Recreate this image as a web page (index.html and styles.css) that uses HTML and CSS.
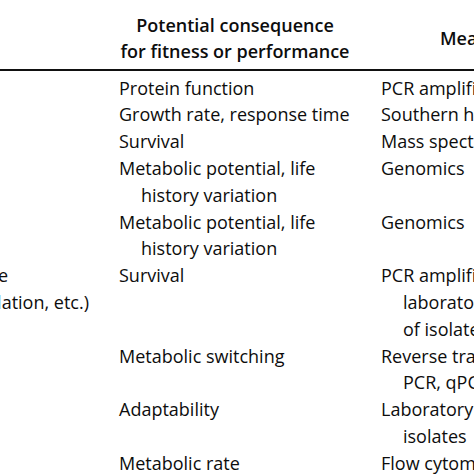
FILE: index.html
```html
<!DOCTYPE html>
<html>
<head>
<meta charset="utf-8">
<link rel="stylesheet" href="styles.css">
</head>
<body>
<div class="table">
  <div class="head">
    <div class="hc c1"></div>
    <div class="hc c2">Potential consequence<br>for fitness or performance</div>
    <div class="hc c3">Measurement approach</div>
  </div>
  <div class="body">
    <div class="cell c1"></div>
    <div class="cell c2">Protein function</div>
    <div class="cell c3">PCR amplification</div>

    <div class="cell c1"></div>
    <div class="cell c2">Growth rate, response time</div>
    <div class="cell c3">Southern hybridization</div>

    <div class="cell c1"></div>
    <div class="cell c2">Survival</div>
    <div class="cell c3">Mass spectrometry</div>

    <div class="cell c1"></div>
    <div class="cell c2">Metabolic potential, life<br>history variation</div>
    <div class="cell c3">Genomics</div>

    <div class="cell c1"></div>
    <div class="cell c2">Metabolic potential, life<br>history variation</div>
    <div class="cell c3">Genomics</div>

    <div class="cell c1"><span class="l1">Cell size or shape</span><span class="l2">(motility, sporulation, etc.)</span></div>
    <div class="cell c2">Survival</div>
    <div class="cell c3">PCR amplification,<br>laboratory culture<br>of isolates</div>

    <div class="cell c1"></div>
    <div class="cell c2">Metabolic switching</div>
    <div class="cell c3">Reverse transcription<br>PCR, qPCR</div>

    <div class="cell c1"></div>
    <div class="cell c2">Adaptability</div>
    <div class="cell c3">Laboratory culture of<br>isolates</div>

    <div class="cell c1"></div>
    <div class="cell c2">Metabolic rate</div>
    <div class="cell c3">Flow cytometry</div>
  </div>
</div>
</body>
</html>
```
FILE: styles.css
```css
html, body {
  margin: 0;
  padding: 0;
  overflow: hidden;
  background: #ffffff;
}
body {
  width: 474px;
  height: 474px;
  font-family: "Open Sans", "Noto Sans", sans-serif;
  font-size: 18px;
  line-height: 26.8px;
  color: #0d0d0d;
}
.table {
  margin-left: -200px;
  width: 1100px;
}
.head,
.body {
  display: grid;
  grid-template-columns: 289px 232px 400px;
  column-gap: 30px;
}
.head {
  padding-top: 11.6px;
  padding-bottom: 3.4px;
  border-bottom: 2px solid #111111;
}
.hc {
  font-weight: 600;
}
.hc.c2 {
  text-align: center;
}
.hc.c3 {
  align-self: center;
  padding-left: 59px;
  white-space: nowrap;
}
.body {
  padding-top: 4px;
}
.cell {
  white-space: nowrap;
}
.cell.c2,
.cell.c3 {
  padding-left: 22px;
  text-indent: -22px;
}
.cell.c1 {
  text-align: right;
}
.cell.c1 span {
  display: block;
}
.cell.c1 .l1 {
  margin-right: 81px;
}
```
